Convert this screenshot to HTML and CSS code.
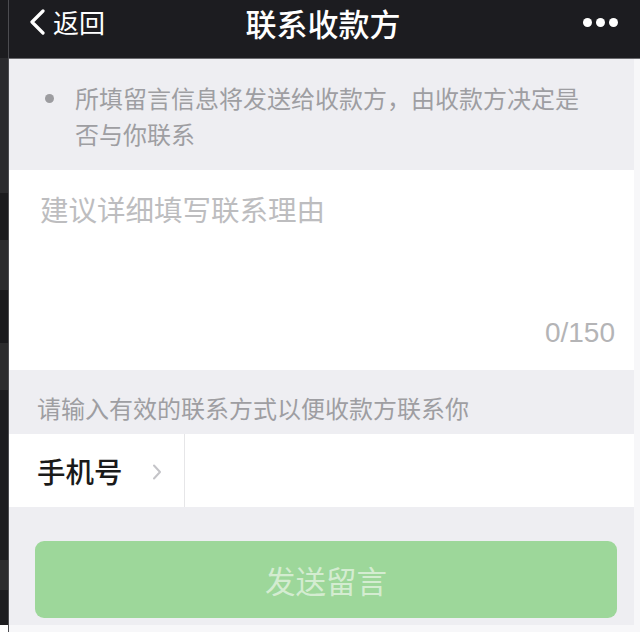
FILE: index.html
```html
<!DOCTYPE html>
<html lang="zh-CN">
<head>
  <meta charset="UTF-8" />
  <meta name="viewport" content="width=device-width, initial-scale=1.0"/>
  <title>联系收款方</title>
  <link rel="stylesheet" href="styles.css">
</head>
<body>
  <div class="frame">
    <!-- edge of the neighbouring screenshot -->
    <div class="edge">
      <div class="band b1"></div>
      <div class="band b2"></div>
      <div class="band b3"></div>
      <div class="band b4"></div>
      <div class="band b5"></div>
      <div class="band b6"></div>
      <div class="band b7"></div>
      <div class="band b8"></div>
      <div class="band b9"></div>
      <div class="band b10"></div>
    </div>

    <div class="screen">
      <header class="nav">
        <div class="nav-left">
          <svg class="back-icon" width="18" height="26" viewBox="0 0 18 26">
            <path d="M15 2 L4 13 L15 24" fill="none" stroke="#fff" stroke-width="3.2" stroke-linecap="round" stroke-linejoin="round"/>
          </svg>
          <span class="back-text">返回</span>
        </div>
        <div class="nav-title">联系收款方</div>
        <div class="nav-right">
          <span class="more-dot"></span>
          <span class="more-dot"></span>
          <span class="more-dot"></span>
        </div>
      </header>

      <main class="content">
        <div class="notice">
          <span class="bullet"></span>
          <p>所填留言信息将发送给收款方，由收款方决定是否与你联系</p>
        </div>

        <div class="message">
          <div class="placeholder">建议详细填写联系理由</div>
          <div class="count">0/150</div>
        </div>

        <div class="hint">请输入有效的联系方式以便收款方联系你</div>

        <div class="phone-row">
          <div class="phone-label">
            <span>手机号</span>
            <svg class="chevron" width="12" height="18" viewBox="0 0 12 18">
              <path d="M3 2.5 L9 9 L3 15.5" fill="none" stroke="#c4c4c8" stroke-width="2" stroke-linecap="round" stroke-linejoin="round"/>
            </svg>
          </div>
          <div class="phone-input"></div>
        </div>

        <div class="actions">
          <button class="send-btn" disabled>发送留言</button>
        </div>
      </main>
    </div>
  </div>
</body>
</html>
```

FILE: styles.css
```css
* {
  box-sizing: border-box;
  font-family: "Noto Sans CJK SC", "Noto Sans", sans-serif;
}

body {
  margin: 0;
  padding: 0;
  background: #fff;
}

.frame {
  display: flex;
  width: 640px;
  height: 632px;
  overflow: hidden;
}

/* left strip */
.edge {
  width: 9px;
  display: flex;
  flex-direction: column;
  border-right: 1px solid #4c4c50;
}

.band { width: 100%; }
.b1 { height: 58px; background: #1c1c1f; }
.b2 { height: 135px; background: #2b2b2e; }
.b3 { height: 47px; background: #1b1b1e; }
.b4 { height: 50px; background: #2c2c2e; }
.b5 { height: 53px; background: #1a1a1d; }
.b6 { height: 47px; background: #2c2c2e; }
.b7 { height: 170px; background: #1c1c1f; }
.b8 { height: 30px; background: #2c2c2e; }
.b9 { height: 35px; background: #1c1c1f; }
.b10 { height: 7px; background: #fff; }

.screen {
  flex: 1;
  display: flex;
  flex-direction: column;
}

/* nav bar */
.nav {
  height: 59px;
  background: #1c1c20;
  border-bottom: 1px solid #6a6a6e;
  display: grid;
  grid-template-columns: 1fr auto 1fr;
  align-items: start;
  padding: 0 22px 0 19px;
}

.nav-left,
.nav-title,
.nav-right {
  height: 44px;
  display: flex;
  align-items: center;
}

.nav-left {
  gap: 7px;
  color: #fff;
}

.back-text {
  font-size: 26px;
  line-height: 1;
}

.nav-title {
  color: #fff;
  font-size: 31px;
  font-weight: 500;
  line-height: 1;
}

.nav-right {
  justify-content: flex-end;
  gap: 4px;
}

.more-dot {
  width: 9px;
  height: 9px;
  border-radius: 50%;
  background: #fff;
}

/* content */
.content {
  flex: 1;
  display: flex;
  flex-direction: column;
  background: #f7f7f9;
  padding-right: 6px;
  padding-bottom: 7px;
}

.notice {
  display: flex;
  align-items: flex-start;
  background: #eeeef2;
  padding: 21px 0 18px 36px;
}

.bullet {
  width: 9px;
  height: 9px;
  margin-top: 14px;
  border-radius: 50%;
  background: #9c9ca0;
  flex-shrink: 0;
}

.notice p {
  margin: 0 0 0 21px;
  width: 514px;
  font-size: 24px;
  line-height: 36px;
  color: #9e9ea2;
}

.message {
  height: 200px;
  background: #fff;
  display: flex;
  flex-direction: column;
  justify-content: space-between;
  padding: 19px 19px 17px 31px;
}

.placeholder {
  font-size: 28.5px;
  line-height: 40px;
  color: #bdbdbf;
}

.count {
  align-self: flex-end;
  font-family: "Liberation Sans", "Noto Sans", sans-serif;
  font-size: 28px;
  line-height: 40px;
  color: #b4b4b6;
}

.hint {
  height: 64px;
  background: #eeeef2;
  padding: 23px 0 0 28px;
  font-size: 24px;
  line-height: 30px;
  color: #9e9ea2;
}

.phone-row {
  height: 73px;
  background: #fff;
  display: flex;
}

.phone-label {
  width: 176px;
  display: flex;
  align-items: center;
  padding-left: 28px;
  border-right: 1px solid #e6e6e8;
  font-size: 28.5px;
  font-weight: 500;
  color: #1a1a1a;
}

.chevron {
  margin-left: 28px;
  margin-top: 2px;
}

.phone-input {
  flex: 1;
}

.actions {
  flex: 1;
  background: #eeeef2;
  padding: 34px 17px 0 26px;
}

.send-btn {
  width: 100%;
  height: 77px;
  border: none;
  border-radius: 9px;
  background: #9dd79a;
  color: #d4ecd1;
  font-size: 30.5px;
  cursor: default;
}
```
